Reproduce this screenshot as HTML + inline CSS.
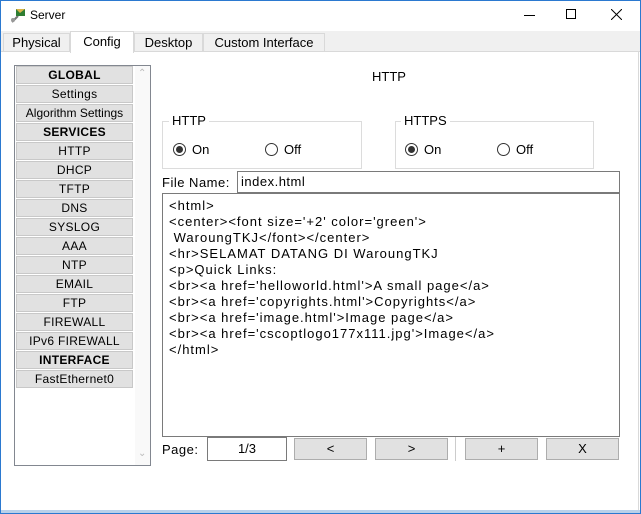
<!DOCTYPE html>
<html><head><style>
*{margin:0;padding:0;box-sizing:border-box}
body{width:641px;height:514px;position:relative;overflow:hidden;background:#fff;font-family:"Liberation Sans",sans-serif;font-size:13px;color:#000}
.a{position:absolute}
.it{position:absolute;left:16px;width:117px;height:18px;background:#e1e1e1;border:1px solid #c8c8c8;text-align:center;line-height:16px;font-size:12px;letter-spacing:0.3px}
.b{font-weight:bold}
.btn{position:absolute;top:438px;height:22px;background:#e1e1e1;border:1px solid #adadad;text-align:center;line-height:20px}
.grp{position:absolute;border:1px solid #dcdcdc}
.rad{position:absolute;width:13px;height:13px;border:1px solid #333;border-radius:50%;background:#fff}
.rad.on::after{content:"";position:absolute;left:2px;top:2px;width:7px;height:7px;border-radius:50%;background:#333}
</style></head><body>
<div class="a" style="left:0;top:0;width:641px;height:514px;border:1px solid #2b79d0"></div>
<svg class="a" style="left:9px;top:7px" width="18" height="18" viewBox="0 0 18 18"><path d="M3 15 L9 9" stroke="#777" stroke-width="2"/><rect x="7" y="2" width="9" height="7" fill="#2e7d32"/><path d="M7 2 L16 2 L11 6Z" fill="#d9b44a"/><circle cx="4" cy="13" r="2" fill="#999"/></svg>
<div class="a" style="left:30px;top:8px;font-size:12px">Server</div>
<div class="a" style="left:524px;top:15px;width:11px;height:1px;background:#000"></div>
<div class="a" style="left:566px;top:9px;width:10px;height:10px;border:1px solid #000"></div>
<svg class="a" style="left:611px;top:9px" width="11" height="11"><path d="M0 0L11 11M11 0L0 11" stroke="#000" stroke-width="1"/></svg>
<div class="a" style="left:1px;top:31px;width:639px;height:21px;background:#f0f0f0;border-bottom:1px solid #d9d9d9"></div>
<div class="a" style="left:3px;top:33px;width:67px;height:19px;border:1px solid #d9d9d9;border-bottom:none;text-align:center;line-height:18px">Physical</div>
<div class="a" style="left:70px;top:31px;width:64px;height:22px;background:#fff;border:1px solid #d9d9d9;border-bottom:none;text-align:center;line-height:20px">Config</div>
<div class="a" style="left:134px;top:33px;width:69px;height:19px;border:1px solid #d9d9d9;border-bottom:none;text-align:center;line-height:18px">Desktop</div>
<div class="a" style="left:203px;top:33px;width:122px;height:19px;border:1px solid #d9d9d9;border-bottom:none;text-align:center;line-height:18px">Custom Interface</div>
<div class="a" style="left:1px;top:52px;width:638px;height:459px;border-right:1px solid #d9d9d9"></div>
<div class="a" style="left:1px;top:510px;width:639px;height:3px;background:#b9d1ea"></div>
<div class="a" style="left:14px;top:65px;width:137px;height:401px;border:1px solid #828790;background:#fff"></div>
<div class="a" style="left:135px;top:66px;width:15px;height:399px;background:#f9f9f9"></div>
<div class="a" style="left:138px;top:68px;color:#bbb;font-size:10px">&#8963;</div>
<div class="a" style="left:138px;top:448px;color:#bbb;font-size:10px">&#8964;</div>
<div class="it b" style="top:66px">GLOBAL</div>
<div class="it" style="top:85px">Settings</div>
<div class="it" style="top:104px;letter-spacing:0">Algorithm Settings</div>
<div class="it b" style="top:123px">SERVICES</div>
<div class="it" style="top:142px">HTTP</div>
<div class="it" style="top:161px">DHCP</div>
<div class="it" style="top:180px">TFTP</div>
<div class="it" style="top:199px">DNS</div>
<div class="it" style="top:218px">SYSLOG</div>
<div class="it" style="top:237px">AAA</div>
<div class="it" style="top:256px">NTP</div>
<div class="it" style="top:275px">EMAIL</div>
<div class="it" style="top:294px">FTP</div>
<div class="it" style="top:313px">FIREWALL</div>
<div class="it" style="top:332px">IPv6 FIREWALL</div>
<div class="it b" style="top:351px">INTERFACE</div>
<div class="it" style="top:370px">FastEthernet0</div>
<div class="a" style="left:372px;top:69px">HTTP</div>
<div class="grp" style="left:162px;top:121px;width:200px;height:48px"></div>
<div class="a" style="left:169px;top:113px;background:#fff;padding:0 3px">HTTP</div>
<div class="rad on" style="left:173px;top:143px"></div><div class="a" style="left:192px;top:142px">On</div>
<div class="rad" style="left:265px;top:143px"></div><div class="a" style="left:284px;top:142px">Off</div>
<div class="grp" style="left:395px;top:121px;width:199px;height:48px"></div>
<div class="a" style="left:401px;top:113px;background:#fff;padding:0 3px">HTTPS</div>
<div class="rad on" style="left:405px;top:143px"></div><div class="a" style="left:424px;top:142px">On</div>
<div class="rad" style="left:497px;top:143px"></div><div class="a" style="left:516px;top:142px">Off</div>
<div class="a" style="left:162px;top:175px;letter-spacing:0.5px">File Name:</div>
<div class="a" style="left:237px;top:171px;width:383px;height:22px;border:1px solid #7a7a7a;padding-left:3px;line-height:20px;letter-spacing:0.5px">index.html</div>
<div class="a" style="left:162px;top:193px;width:458px;height:244px;border:1px solid #7a7a7a;padding:4px 0 0 6px;line-height:16px;white-space:pre;letter-spacing:1px">&lt;html&gt;
&lt;center&gt;&lt;font size='+2' color='green'&gt;
 WaroungTKJ&lt;/font&gt;&lt;/center&gt;
&lt;hr&gt;SELAMAT DATANG DI WaroungTKJ
&lt;p&gt;Quick Links:
&lt;br&gt;&lt;a href='helloworld.html'&gt;A small page&lt;/a&gt;
&lt;br&gt;&lt;a href='copyrights.html'&gt;Copyrights&lt;/a&gt;
&lt;br&gt;&lt;a href='image.html'&gt;Image page&lt;/a&gt;
&lt;br&gt;&lt;a href='cscoptlogo177x111.jpg'&gt;Image&lt;/a&gt;
&lt;/html&gt;</div>
<div class="a" style="left:162px;top:442px;letter-spacing:0.5px">Page:</div>
<div class="a" style="left:207px;top:437px;width:80px;height:24px;border:1px solid #7a7a7a;text-align:center;line-height:22px">1/3</div>
<div class="btn" style="left:294px;width:73px">&lt;</div>
<div class="btn" style="left:375px;width:73px">&gt;</div>
<div class="a" style="left:455px;top:437px;width:1px;height:24px;background:#ccc"></div>
<div class="btn" style="left:465px;width:73px">+</div>
<div class="btn" style="left:546px;width:73px">X</div>
</body></html>
